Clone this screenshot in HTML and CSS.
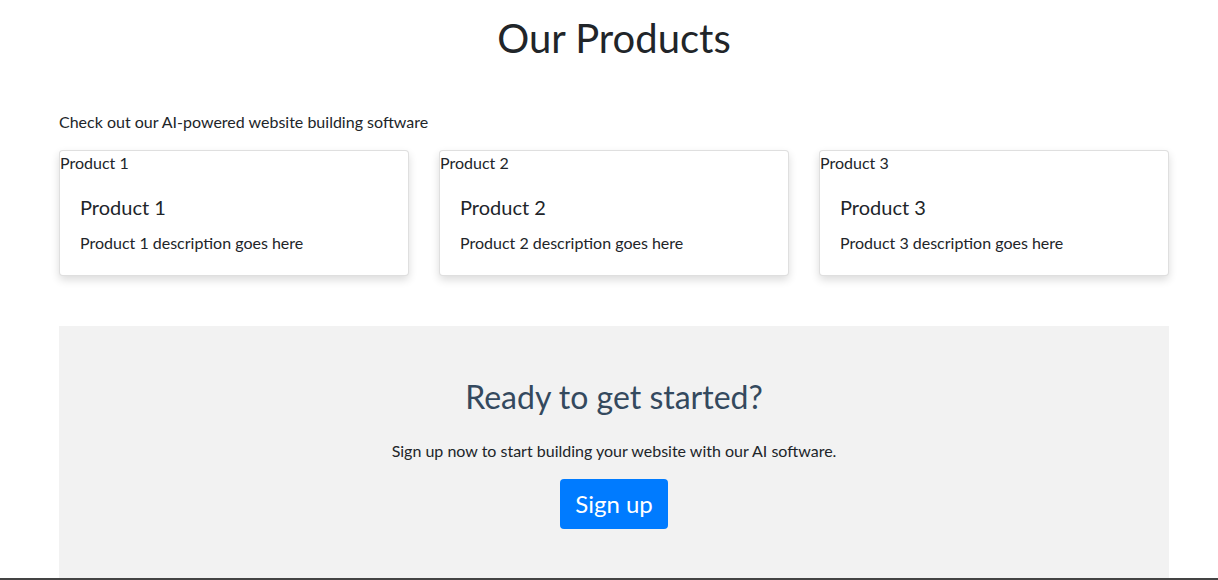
FILE: index.html
```html
<!DOCTYPE html>
<html lang="en">
  <head>
    <meta charset="UTF-8" />
    <meta name="viewport" content="width=device-width, initial-scale=1.0" />
    <title>Our Products</title>
    <link rel="stylesheet" href="styles.css">
  </head>
  <body>
    <section class="products container">
      <h1>Our Products</h1>
      <p>Check out our AI-powered website building software</p>

      <div class="product-row">
        <div class="card">
          <span class="card-img">Product 1</span>
          <div class="card-body">
            <h5>Product 1</h5>
            <p class="card-text">Product 1 description goes here</p>
          </div>
        </div>
        <div class="card">
          <span class="card-img">Product 2</span>
          <div class="card-body">
            <h5>Product 2</h5>
            <p class="card-text">Product 2 description goes here</p>
          </div>
        </div>
        <div class="card">
          <span class="card-img">Product 3</span>
          <div class="card-body">
            <h5>Product 3</h5>
            <p class="card-text">Product 3 description goes here</p>
          </div>
        </div>
      </div>
    </section>

    <section class="cta container">
      <div class="cta-box">
        <h2>Ready to get started?</h2>
        <p>Sign up now to start building your website with our AI software.</p>
        <button class="btn-signup">Sign up</button>
      </div>
    </section>

    <footer class="footer"></footer>
  </body>
</html>
```

FILE: styles.css
```css
:root {
  --primary-color: #007bff;
  --text-color: #212529;
  --heading-color: #34495e;
  --cta-bg: #f2f2f2;
  --border-color: rgba(0, 0, 0, 0.125);
}

body {
  font-family: 'Lato', 'Noto Sans', sans-serif;
  font-size: 16px;
  line-height: 1.5;
  color: var(--text-color);
  background-color: white;
  margin: 0;
  padding-left: 10px;
}

.container {
  max-width: 1110px;
  margin: 0 auto;
}

h1 {
  font-size: 40px;
  font-weight: 400;
  line-height: 1.2;
  text-align: center;
  margin: 14px 0 48px;
}

p {
  margin: 0 0 16px;
}

.product-row {
  display: grid;
  grid-template-columns: repeat(3, 1fr);
  gap: 30px;
  margin-bottom: 50px;
}

.card {
  display: flex;
  flex-direction: column;
  background-color: white;
  border: 1px solid var(--border-color);
  border-radius: 4px;
  box-shadow: 0 4px 8px rgba(0, 0, 0, 0.14);
}

.card-img {
  line-height: 24px;
}

.card-body {
  padding: 20px;
}

.card-body h5 {
  font-size: 20px;
  font-weight: 400;
  line-height: 1.2;
  margin: 0 0 12px;
}

.card-text {
  margin: 0;
}

.cta-box {
  background-color: var(--cta-bg);
  text-align: center;
  padding: 52px 20px 0;
  height: 200px;
}

.cta-box h2 {
  color: var(--heading-color);
  font-size: 32px;
  font-weight: 400;
  line-height: 1.2;
  margin: 0 0 23px;
}

.btn-signup {
  font-family: inherit;
  font-size: 24px;
  line-height: 1.5;
  padding: 7px 15px;
  color: white;
  background-color: var(--primary-color);
  border: none;
  border-radius: 4px;
  cursor: pointer;
}

.footer {
  margin-left: -10px;
  background-color: #444;
  height: 40px;
}
```
